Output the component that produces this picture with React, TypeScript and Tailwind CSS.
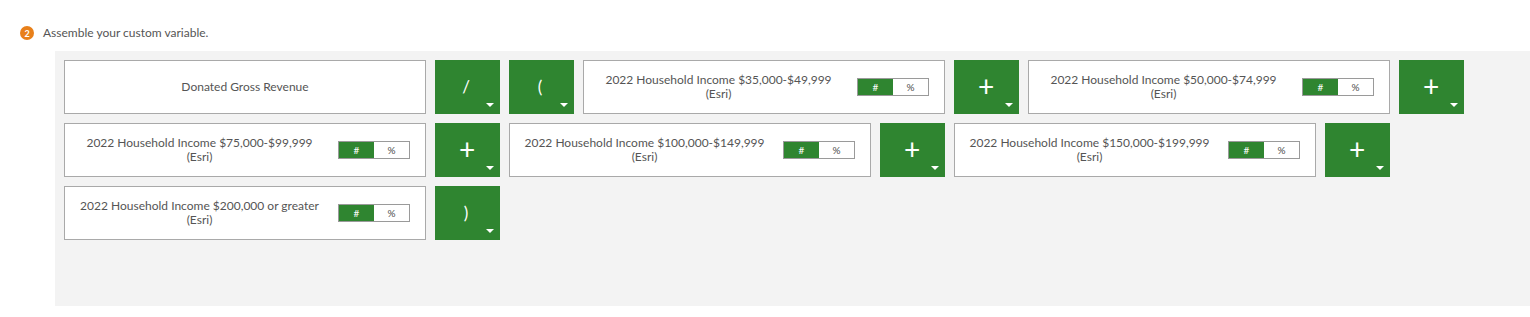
type Item =
  | { kind: 'field'; label: string; sub?: string; toggle?: boolean }
  | { kind: 'op'; symbol: string };

const items: Item[] = [
  { kind: 'field', label: 'Donated Gross Revenue' },
  { kind: 'op', symbol: '/' },
  { kind: 'op', symbol: '(' },
  { kind: 'field', label: '2022 Household Income $35,000-$49,999', sub: '(Esri)', toggle: true },
  { kind: 'op', symbol: '+' },
  { kind: 'field', label: '2022 Household Income $50,000-$74,999', sub: '(Esri)', toggle: true },
  { kind: 'op', symbol: '+' },
  { kind: 'field', label: '2022 Household Income $75,000-$99,999', sub: '(Esri)', toggle: true },
  { kind: 'op', symbol: '+' },
  { kind: 'field', label: '2022 Household Income $100,000-$149,999', sub: '(Esri)', toggle: true },
  { kind: 'op', symbol: '+' },
  { kind: 'field', label: '2022 Household Income $150,000-$199,999', sub: '(Esri)', toggle: true },
  { kind: 'op', symbol: '+' },
  { kind: 'field', label: '2022 Household Income $200,000 or greater', sub: '(Esri)', toggle: true },
  { kind: 'op', symbol: ')' },
];

function UnitToggle() {
  return (
    <div className="flex h-[18px] w-[72px] shrink-0 border border-[#9a9a9a] text-[10px] leading-none">
      <div className="flex w-[35px] items-center justify-center bg-[#2f8530] text-white">#</div>
      <div className="flex flex-1 items-center justify-center bg-white text-[#4c4c4c]">%</div>
    </div>
  );
}

function FieldBox({ label, sub, toggle }: { label: string; sub?: string; toggle?: boolean }) {
  return (
    <div className="flex h-[54px] w-[362px] items-center border border-[#a9a9a9] bg-white">
      <div className="flex-1 text-center text-[12px] leading-[14px] text-[#555555]">
        <div>{label}</div>
        {sub && <div>{sub}</div>}
      </div>
      {toggle && (
        <div className="ml-1 mr-[15px]">
          <UnitToggle />
        </div>
      )}
    </div>
  );
}

function OperatorButton({ symbol }: { symbol: string }) {
  const isPlus = symbol === '+';
  return (
    <button className="relative flex h-[54px] w-[65px] items-center justify-center bg-[#2f8530] text-white">
      <span
        className={
          isPlus
            ? 'mb-[3px] mr-[1px] text-[28px] font-normal leading-none'
            : 'mb-[2px] mr-[3px] text-[17px] leading-none'
        }
      >
        {symbol}
      </span>
      <span className="absolute bottom-[7px] right-[6px] h-0 w-0 border-x-[4px] border-t-[4px] border-x-transparent border-t-white" />
    </button>
  );
}

export default function App() {
  return (
    <div
      className="h-[317px] w-[1530px] overflow-hidden bg-white pt-[25px]"
      style={{ fontFamily: 'Lato, "Open Sans", sans-serif' }}
    >
      <div className="flex h-4 items-center pl-5">
        <span className="flex h-[14px] w-[14px] items-center justify-center rounded-full bg-[#e8801a] text-[9px] font-bold leading-none text-white">
          2
        </span>
        <span className="ml-[9px] text-[12px] leading-4 text-[#555555]">Assemble your custom variable.</span>
      </div>

      <div className="ml-[55px] mt-[10px] h-[255px] bg-[#f3f3f3] p-[9px]">
        <div className="flex flex-wrap gap-[9px]">
          {items.map((it, i) =>
            it.kind === 'field' ? (
              <FieldBox key={i} label={it.label} sub={it.sub} toggle={it.toggle} />
            ) : (
              <OperatorButton key={i} symbol={it.symbol} />
            ),
          )}
        </div>
      </div>
    </div>
  );
}
